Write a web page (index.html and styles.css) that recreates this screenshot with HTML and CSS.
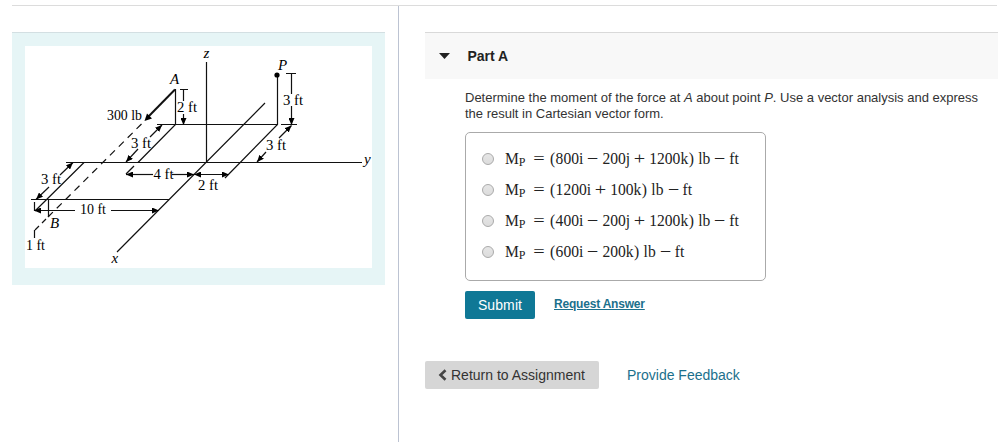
FILE: index.html
```html
<!DOCTYPE html>
<html lang="en">
<head>
<meta charset="utf-8">
<title>Part A</title>
<link rel="stylesheet" href="styles.css">
</head>
<body>
<div class="page">
  <aside class="left">
    <div class="figure-panel">
      <svg class="figure" viewBox="25 46 347 222" width="347" height="222">
        <defs>
          <marker id="arrow" viewBox="0 0 7 6" refX="7" refY="3" markerWidth="7" markerHeight="6" markerUnits="userSpaceOnUse" orient="auto-start-reverse"><path class="head" d="M0 0L7 3L0 6Z"/></marker>
        </defs>
        <g class="lines">
          <path d="M206.5 62V162M66 162.5H362M157 124.5H277.5M265 103L117 252M277.5 75V124.5L225 178M281 124.5H297M286 73.5H296M291.5 73.5V94"/>
          <path d="M175.5 89V124.5L138 162.5M180 89.5H188M183.5 89.5V101M84 162.5L35 211M31 199.5H169M34.5 202V211M48.5 199.5V217M34.5 230V238"/>
          <path class="dash" d="M141.500 124L48 217"/>
          <path d="M46 219L42 223M39 226L35 230"/>
          <path d="M134 166L126 174"/>
          <path class="arrow-end" d="M291.5 106V125"/>
          <path class="arrow-end" d="M279 138L291.5 125.5"/>
          <path class="arrow-end" d="M266 152L257 162"/>
          <path class="arrow-end" d="M183.5 114V125"/>
          <path class="arrow-end" d="M150 137L162 125"/>
          <path class="arrow-end" d="M138 149L126 162"/>
          <path class="arrow-end" d="M60 175L73 162.5"/>
          <path class="arrow-end" d="M49 187L36 199.5"/>
          <path class="arrow-end" d="M75 210.5H34"/>
          <path class="arrow-end" d="M111 210.5H159"/>
          <path class="arrow-end" d="M153 174.5H126"/>
          <path class="arrow-end" d="M172 174.5H194"/>
          <path class="arrow-both" d="M194 174.5H229"/>
          <path class="force" d="M175 89.5L148 117"/>
        </g>
        <path class="head" d="M144.5 121L147 113.5L152 118.5Z"/>
        <circle class="head" cx="277" cy="75" r="2.6"/>
        <g class="labels">
          <text class="var" x="203.5" y="58">z</text>
          <text class="var" x="278" y="70">P</text>
          <text class="var" x="170" y="84">A</text>
          <text class="var" x="364" y="164">y</text>
          <text class="var" x="50" y="228">B</text>
          <text class="var" x="111.5" y="262.5">x</text>
          <text x="107" y="120" textLength="35" lengthAdjust="spacingAndGlyphs">300 lb</text>
          <text x="177" y="112" textLength="20" lengthAdjust="spacingAndGlyphs">2 ft</text>
          <text x="283" y="105" textLength="20" lengthAdjust="spacingAndGlyphs">3 ft</text>
          <text x="266" y="150" textLength="20" lengthAdjust="spacingAndGlyphs">3 ft</text>
          <text x="131" y="148" textLength="20" lengthAdjust="spacingAndGlyphs">3 ft</text>
          <text x="41" y="184" textLength="20" lengthAdjust="spacingAndGlyphs">3 ft</text>
          <text x="153.5" y="179" textLength="20" lengthAdjust="spacingAndGlyphs">4 ft</text>
          <text x="198" y="190" textLength="20" lengthAdjust="spacingAndGlyphs">2 ft</text>
          <text x="80" y="214" textLength="26" lengthAdjust="spacingAndGlyphs">10 ft</text>
          <text x="26" y="250" textLength="19" lengthAdjust="spacingAndGlyphs">1 ft</text>
        </g>
      </svg>
    </div>
  </aside>
  <main class="right">
    <header class="part">
      <svg class="caret" width="11" height="6" viewBox="0 0 11 6"><path d="M0 0H11L5.5 6Z"/></svg>
      <h2>Part A</h2>
    </header>
    <section class="content">
      <p class="question">Determine the moment of the force at <i>A</i> about point <i>P</i>. Use a vector analysis and express<br>the result in Cartesian vector form.</p>
      <div class="choices">
        <label class="choice"><input type="radio" name="a"><span class="math"><span class="m">M</span><sub>P</sub><span class="rel">=</span><span class="par">(</span>800i<span class="op">−</span>200j<span class="op">+</span>1200k<span class="close">)</span>lb<span class="op">−</span><span class="ft">ft</span></span></label>
        <label class="choice"><input type="radio" name="a"><span class="math"><span class="m">M</span><sub>P</sub><span class="rel">=</span><span class="par">(</span>1200i<span class="op">+</span>100k<span class="close">)</span>lb<span class="op">−</span><span class="ft">ft</span></span></label>
        <label class="choice"><input type="radio" name="a"><span class="math"><span class="m">M</span><sub>P</sub><span class="rel">=</span><span class="par">(</span>400i<span class="op">−</span>200j<span class="op">+</span>1200k<span class="close">)</span>lb<span class="op">−</span><span class="ft">ft</span></span></label>
        <label class="choice"><input type="radio" name="a"><span class="math"><span class="m">M</span><sub>P</sub><span class="rel">=</span><span class="par">(</span>600i<span class="op">−</span>200k<span class="close">)</span>lb<span class="op">−</span><span class="ft">ft</span></span></label>
      </div>
      <div class="actions">
        <button class="submit">Submit</button>
        <a class="request" href="#">Request Answer</a>
      </div>
    </section>
    <footer class="footer">
      <button class="return"><svg width="9" height="12" viewBox="0 0 9 12"><path d="M7.5 1.2L2.5 6L7.5 10.8"/></svg><span>Return to Assignment</span></button>
      <a class="feedback" href="#">Provide Feedback</a>
    </footer>
  </main>
</div>
</body>
</html>
```
FILE: styles.css
```css
* { box-sizing: border-box; }
body { margin: 0; background: #fff; color: #333; font-family: "Liberation Sans", Arial, sans-serif; overflow: hidden; }
.page { display: flex; height: 437px; margin: 5px 1px 0 12px; border-top: 1px solid #dcdcdc; }
.left { width: 387px; flex: none; padding-top: 26px; border-right: 1px solid #bcc3d2; }
.figure-panel { width: 373px; height: 253px; padding: 13px; border-top: 1px solid #d3dfe2; background: #e6f5f6; }
.figure { display: block; background: #fff; }
.lines path { fill: none; stroke: #111; stroke-width: 1.2; }
.lines .dash { stroke-dasharray: 7 5.5; }
.lines .force { stroke-width: 2; }
.arrow-end { marker-end: url(#arrow); }
.arrow-both { marker-start: url(#arrow); marker-end: url(#arrow); }
.lines .head, .head { fill: #000; }
.labels { font: 15px "Liberation Serif", "Times New Roman", serif; fill: #000; }
.labels .var { font-style: italic; }
.right { flex: 1; min-width: 0; padding: 26px 0 0 26px; }
.part { display: flex; align-items: center; height: 47px; margin-right: -1px; padding-left: 14px; border-top: 1px solid #d9d9d9; background: #f8f8f8; }
.caret { fill: #222; }
.part h2 { margin: 0 0 1px 17.5px; font-size: 14px; line-height: 18px; color: #222; }
.content { padding: 11px 0 0 40px; }
.question { margin: 0; font-size: 13px; line-height: 16px; white-space: nowrap; }
.choices { width: 301px; height: 149px; margin-top: 10px; padding: 10px 0 0 16px; border: 1px solid #aaa; border-radius: 5px; }
.choice { display: flex; align-items: center; height: 31px; }
.choice input { appearance: none; width: 12px; height: 12px; margin: 0 11px 0 0; border: 1px solid #aaa; border-radius: 50%; background: linear-gradient(#e6e6e6, #dcdcdc); }
.math { font: 15.6px/20px "Liberation Serif", "Times New Roman", serif; color: #222; white-space: nowrap; transform: scaleY(1.06); }
.math span { display: inline-block; }
.m { width: .88em; }
.math sub { display: inline-block; width: .75em; font-size: 12px; line-height: 1; vertical-align: -2px; }
.math .rel { width: 1.4em; text-align: center; transform: scaleX(1.3); }
.par { width: .389em; text-align: center; }
.close { width: .64em; padding-left: .03em; }
.math .op { width: 1.222em; text-align: center; transform: scaleX(1.3); }
.ft { width: .7em; }
.actions { display: flex; align-items: flex-start; margin-top: 10px; }
button { border: 0; border-radius: 2px; font-family: inherit; }
.submit { width: 70px; height: 28px; padding: 0; background: #0f7896; color: #fff; font-size: 14px; letter-spacing: .1px; }
.request { margin: 5px 0 0 19px; font-size: 12px; line-height: 16px; font-weight: bold; letter-spacing: -.2px; color: #1b708c; }
.footer { display: flex; align-items: center; margin-top: 42px; }
.return { display: flex; align-items: center; width: 174px; height: 28px; padding: 0 0 0 13px; background: #d6d6d6; color: #333; font-size: 14px; }
.return svg { flex: none; margin-right: 4px; fill: none; stroke: #444; stroke-width: 2.6; }
.feedback { margin-left: 28px; color: #1b708c; font-size: 14px; text-decoration: none; }
```
